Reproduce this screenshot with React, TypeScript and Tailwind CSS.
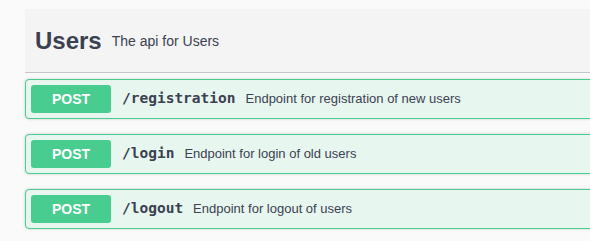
const ops = [
  { path: "/registration", summary: "Endpoint for registration of new users" },
  { path: "/login", summary: "Endpoint for login of old users" },
  { path: "/logout", summary: "Endpoint for logout of users" },
];

export default function App() {
  return (
    <div className="h-[241px] w-[590px] overflow-hidden bg-[#fafafa] font-['Liberation_Sans',Arial,sans-serif] text-[#3b4151]">
      <div className="ml-[25px] w-[620px] pt-[9px]">
        {/* tag header */}
        <div className="flex h-[64px] items-center gap-[10px] border-b border-[#c5c6ca] bg-[#f4f4f4] pl-[10px]">
          <span className="text-[24px] font-bold">Users</span>
          <span className="mt-[2px] text-[14px]">The api for Users</span>
        </div>

        {/* operations */}
        <div className="mt-[6px] flex flex-col gap-[15px]">
          {ops.map((op) => (
            <div
              key={op.path}
              className="flex h-[40px] items-center rounded-[4px] border border-[#49cc90] bg-[#e8f6f0] p-[5px] shadow-[0_0_3px_rgba(0,0,0,0.19)]"
            >
              <span className="flex h-[28px] w-[80px] items-center justify-center rounded-[3px] bg-[#49cc90] text-[14px] font-bold text-white">
                POST
              </span>
              <span className="pl-[11px] pr-[10px] font-['DejaVu_Sans_Mono',monospace] text-[14.5px] font-bold text-[#3b4151]">
                {op.path}
              </span>
              <span className="text-[13px] text-[#3b4151]">{op.summary}</span>
            </div>
          ))}
        </div>
      </div>
    </div>
  );
}
